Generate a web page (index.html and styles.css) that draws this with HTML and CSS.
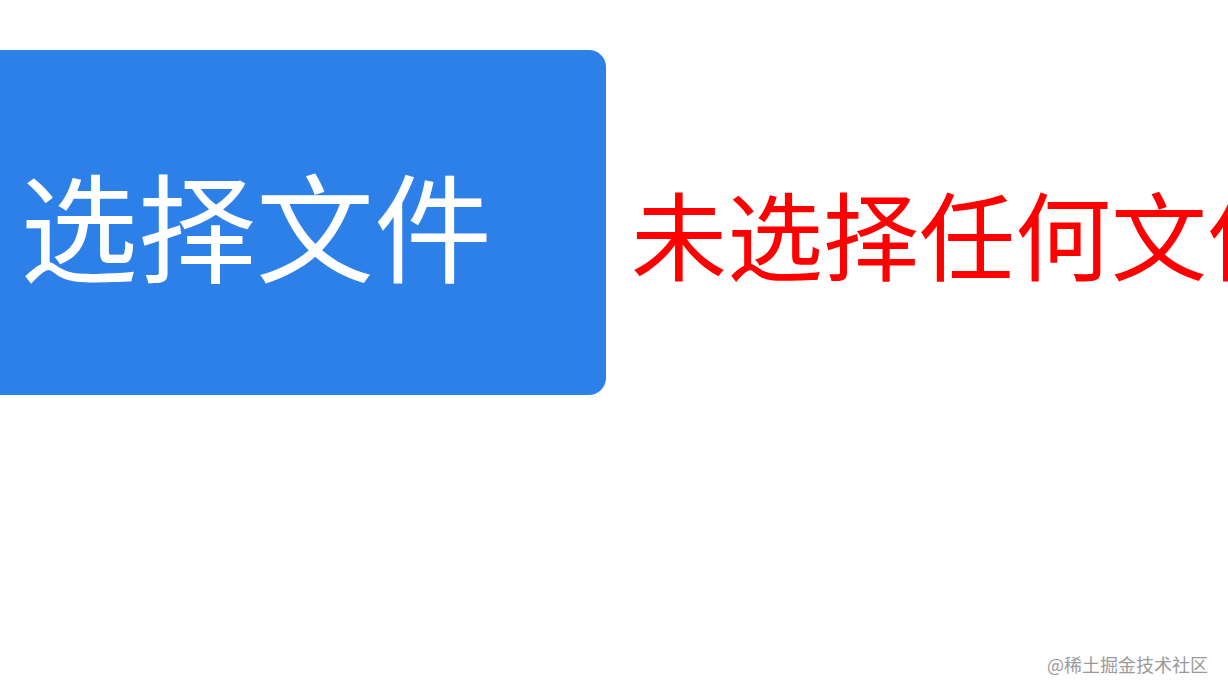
FILE: index.html
```html
<!DOCTYPE html>
<html lang="zh-CN">
<head>
<meta charset="utf-8">
<title>选择文件</title>
<link rel="stylesheet" href="styles.css">
</head>
<body>
<div class="page">
  <div class="row">
    <button class="btn" type="button">选择文件</button>
    <span class="hint">未选择任何文件</span>
  </div>
</div>
<div class="watermark">@稀土掘金技术社区</div>
</body>
</html>
```
FILE: styles.css
```css
html, body {
  margin: 0;
  padding: 0;
  width: 1228px;
  height: 691px;
  overflow: hidden;
  background: #ffffff;
  font-family: "Noto Sans CJK SC", "Microsoft YaHei", sans-serif;
}

.page {
  padding-top: 50px;
}

.row {
  display: flex;
  align-items: center;
  white-space: nowrap;
}

.btn {
  flex: none;
  margin: 0 0 0 -20px;
  width: 626px;
  height: 345px;
  box-sizing: border-box;
  padding: 0 0 0 40px;
  border: none;
  border-radius: 17px;
  background: #2c80e8;
  color: #ffffff;
  font-family: "Noto Sans CJK SC", sans-serif;
  font-size: 118px;
  line-height: 1;
  text-align: left;
  display: flex;
  align-items: center;
}

.hint {
  margin-left: 25px;
  margin-top: 18px;
  font-size: 96px;
  line-height: 1;
  color: #ff0000;
}

.watermark {
  position: absolute;
  right: 20px;
  bottom: 18px;
  font-size: 18px;
  line-height: 1;
  color: #9a9a9a;
}
```
